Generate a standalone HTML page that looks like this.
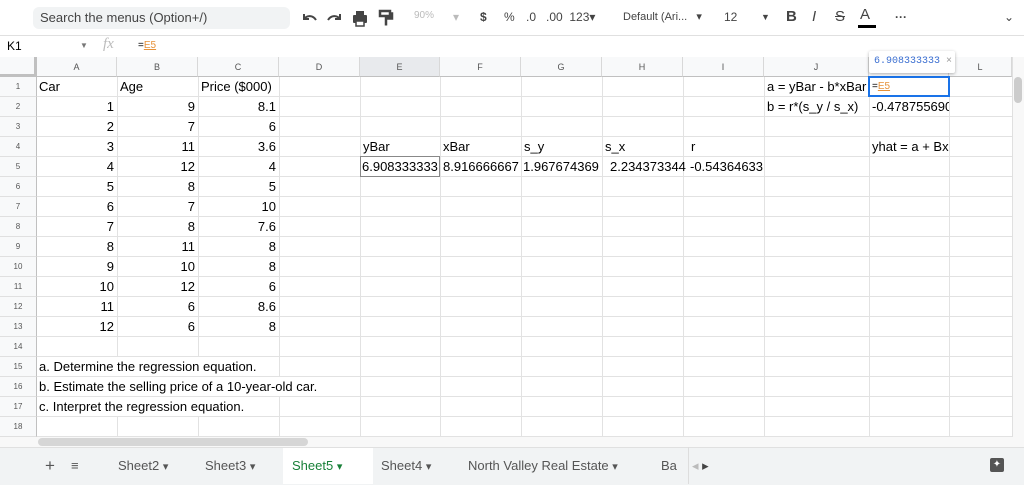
<!DOCTYPE html><html><head><style>
body{margin:0;width:1024px;height:484px;overflow:hidden;font-family:"Liberation Sans",Arial,sans-serif;background:#fff;position:relative}
.a{position:absolute}
.tb{left:0;top:0;width:1024px;height:35px;background:#fff;border-bottom:1px solid #e0e0e0}
.srch{left:33px;top:7px;width:257px;height:22px;background:#f1f3f4;border-radius:6px;font-size:13px;color:#444;line-height:22px;padding-left:7px;box-sizing:border-box}
.ti{top:10px;font-size:12px;color:#444}
.fb{left:0;top:35px;width:1024px;height:22px;border-bottom:1px solid #d0d0d0}
.ch{position:absolute;top:57px;height:20px;background:#f8f9fa;border-right:1px solid #d8d8d8;border-bottom:1px solid #c0c0c0;box-sizing:border-box;font-size:9px;color:#555;text-align:center;line-height:20px}
.rh{position:absolute;left:0;width:37px;height:20px;background:#f8f9fa;border-right:1px solid #c0c0c0;border-bottom:1px solid #e0e0e0;box-sizing:border-box;font-size:8px;color:#555;text-align:center;line-height:20px}
.c{position:absolute;font-size:13px;color:#000;line-height:19px;white-space:nowrap}
.r{text-align:right}
.tab{top:447px;font-size:13px;color:#555;line-height:37px}
</style></head><body>
<div class="a tb"></div>
<div class="a srch">Search the menus (Option+/)</div>
<svg class="a" style="left:300px;top:8px" width="100" height="20" fill="none" stroke="#444" stroke-width="2">
<path d="M4 6v5h5M4 11c3-4 9-4 12 1"/>
<path d="M40 6v5h-5M40 11c-3-4-9-4-12 1"/>
<rect x="53" y="7" width="14" height="8" fill="#444" stroke="none" rx="1"/><rect x="56" y="3" width="8" height="4" fill="#444" stroke="none"/><rect x="56" y="13" width="8" height="5" fill="#fff" stroke="#444" stroke-width="1.5"/>
<path d="M80 3h10v5h-10zM90 5.5h2v5h-6v7" stroke-width="2.5"/>
</svg>
<div class="a ti" style="left:414px;color:#bbb;font-size:10px">90%</div>
<div class="a ti" style="left:453px;color:#bbb">▾</div>
<div class="a ti" style="left:480px;font-weight:bold">$</div>
<div class="a ti" style="left:504px">%</div>
<div class="a ti" style="left:526px">.0&nbsp;&nbsp;&nbsp;.00&nbsp;&nbsp;123▾</div>
<div class="a ti" style="left:623px;font-size:11px">Default (Ari...&nbsp;&nbsp;&nbsp;▾</div>
<div class="a ti" style="left:724px">12</div>
<div class="a ti" style="left:761px;font-size:9px;top:12px">▼</div>
<div class="a ti" style="left:786px;font-size:15px;top:8px;font-weight:bold">B</div>
<div class="a ti" style="left:812px;font-size:15px;top:8px;font-style:italic">I</div>
<div class="a ti" style="left:835px;font-size:15px;top:8px;text-decoration:line-through">S</div>
<div class="a ti" style="left:860px;font-size:15px;top:6px">A</div>
<div class="a" style="left:858px;top:25px;width:18px;height:3px;background:#000"></div>
<div class="a ti" style="left:895px;font-weight:bold">···</div>
<div class="a ti" style="left:1004px">⌄</div>
<div class="a fb"></div>
<div class="a" style="left:7px;top:39px;font-size:12px">K1</div>
<div class="a" style="left:80px;top:41px;font-size:8px;color:#777">▼</div>
<div class="a" style="left:103px;top:36px;font-size:15px;color:#bbb;font-style:italic;font-family:'Liberation Serif',serif">fx</div>
<div class="a" style="left:138px;top:40px;font-size:10px">=<span style="color:#e69138;text-decoration:underline">E5</span></div>
<div class="ch" style="left:0;width:37px;border-right:3px solid #c0c0c0;border-bottom:3px solid #c0c0c0"></div>
<div class="ch" style="left:37px;width:80px">A</div><div class="ch" style="left:117px;width:81px">B</div><div class="ch" style="left:198px;width:81px">C</div><div class="ch" style="left:279px;width:81px">D</div><div class="ch" style="left:360px;width:80px;background:#e8eaed">E</div><div class="ch" style="left:440px;width:81px">F</div><div class="ch" style="left:521px;width:81px">G</div><div class="ch" style="left:602px;width:81px">H</div><div class="ch" style="left:683px;width:81px">I</div><div class="ch" style="left:764px;width:105px">J</div><div class="ch" style="left:869px;width:80px">K</div><div class="ch" style="left:949px;width:63px">L</div>
<svg class="a" style="left:37px;top:77px" width="975" height="360">
<g stroke="#e2e2e2" stroke-width="1">
<path d="M80.5 0V360M161.5 0V360M242.5 0V360M323.5 0V360M403.5 0V360M484.5 0V360M565.5 0V360M646.5 0V360M727.5 0V360M832.5 0V360M912.5 0V360"/>
<path d="M0 19.5H975M0 39.5H975M0 59.5H975M0 79.5H975M0 99.5H975M0 119.5H975M0 139.5H975M0 159.5H975M0 179.5H975M0 199.5H975M0 219.5H975M0 239.5H975M0 259.5H975M0 279.5H975M0 299.5H975M0 319.5H975M0 339.5H975M0 359.5H975"/>
</g></svg>
<div class="rh" style="top:77px">1</div><div class="rh" style="top:97px">2</div><div class="rh" style="top:117px">3</div><div class="rh" style="top:137px">4</div><div class="rh" style="top:157px">5</div><div class="rh" style="top:177px">6</div><div class="rh" style="top:197px">7</div><div class="rh" style="top:217px">8</div><div class="rh" style="top:237px">9</div><div class="rh" style="top:257px">10</div><div class="rh" style="top:277px">11</div><div class="rh" style="top:297px">12</div><div class="rh" style="top:317px">13</div><div class="rh" style="top:337px">14</div><div class="rh" style="top:357px">15</div><div class="rh" style="top:377px">16</div><div class="rh" style="top:397px">17</div><div class="rh" style="top:417px">18</div>
<div class="c" style="left:39px;top:77px">Car</div><div class="c" style="left:120px;top:77px">Age</div><div class="c" style="left:201px;top:77px">Price ($000)</div>
<div class="c r" style="left:37px;width:77px;top:97px;line-height:20px">1<br>2<br>3<br>4<br>5<br>6<br>7<br>8<br>9<br>10<br>11<br>12</div>
<div class="c r" style="left:117px;width:78px;top:97px;line-height:20px">9<br>7<br>11<br>12<br>8<br>7<br>8<br>11<br>10<br>12<br>6<br>6</div>
<div class="c r" style="left:198px;width:78px;top:97px;line-height:20px">8.1<br>6<br>3.6<br>4<br>5<br>10<br>7.6<br>8<br>8<br>6<br>8.6<br>8</div>
<div class="c" style="left:767px;top:77px">a = yBar - b*xBar</div>
<div class="c" style="left:767px;top:97px">b = r*(s_y / s_x)</div>
<div class="c" style="left:872px;top:97px;width:77px;overflow:hidden">-0.4787556900</div>
<div class="c" style="left:363px;top:137px">yBar</div><div class="c" style="left:443px;top:137px">xBar</div><div class="c" style="left:524px;top:137px">s_y</div><div class="c" style="left:605px;top:137px">s_x</div><div class="c" style="left:691px;top:137px">r</div><div class="c" style="left:872px;top:137px">yhat = a + Bx</div>
<div class="a" style="left:360px;top:156px;width:80px;height:21px;border:1px solid #888;box-sizing:border-box;background:#fff"></div>
<div class="c" style="left:362px;top:157px">6.908333333</div><div class="c" style="left:443px;top:157px">8.916666667</div><div class="c" style="left:523px;top:157px">1.967674369</div><div class="c" style="left:610px;top:157px">2.234373344</div><div class="c" style="left:690px;top:157px">-0.54364633</div>
<div class="a" style="left:868px;top:76px;width:82px;height:21px;border:2px solid #1a73e8;box-sizing:border-box;background:#fff;font-size:10px;line-height:17px;padding-left:2px">=<span style="color:#e69138;text-decoration:underline">E5</span></div>
<div class="a" style="left:869px;top:51px;width:86px;height:22px;background:#fff;box-shadow:0 1px 3px rgba(0,0,0,.3);border-radius:2px;font-family:'Liberation Mono',monospace;font-size:10px;color:#3b6fd1;line-height:22px;padding-left:5px;box-sizing:border-box">6.908333333 <span style="color:#999">×</span></div>
<div class="c" style="left:38px;top:357px;background:#fff;padding:0 2px 0 1px">a. Determine the regression equation.</div>
<div class="c" style="left:38px;top:377px;background:#fff;padding:0 2px 0 1px">b. Estimate the selling price of a 10-year-old car.</div>
<div class="c" style="left:38px;top:397px;background:#fff;padding:0 2px 0 1px">c. Interpret the regression equation.</div>
<div class="a" style="left:1012px;top:57px;width:12px;height:380px;background:#f8f8f8;border-left:1px solid #e0e0e0"></div>
<div class="a" style="left:1014px;top:77px;width:8px;height:26px;background:#ccc;border-radius:4px"></div>
<div class="a" style="left:0;top:437px;width:1024px;height:10px;background:#f8f8f8"></div>
<div class="a" style="left:38px;top:438px;width:270px;height:8px;background:#d6d6d6;border-radius:4px"></div>
<div class="a" style="left:0;top:447px;width:1024px;height:37px;background:#f1f3f4;border-top:1px solid #e0e0e0"></div>
<div class="a tab" style="left:45px;font-size:17px">+</div>
<div class="a tab" style="left:71px">≡</div>
<div class="a tab" style="left:118px">Sheet2 <small>▾</small></div>
<div class="a tab" style="left:205px">Sheet3 <small>▾</small></div>
<div class="a" style="left:283px;top:448px;width:90px;height:36px;background:#fff"></div>
<div class="a tab" style="left:292px;color:#188038">Sheet5 <small>▾</small></div>
<div class="a tab" style="left:381px">Sheet4 <small>▾</small></div>
<div class="a tab" style="left:468px">North Valley Real Estate <small>▾</small></div>
<div class="a tab" style="left:661px">Ba</div>
<div class="a tab" style="left:692px;color:#bbb">◂ <span style="color:#444">▸</span></div>
<div class="a" style="left:688px;top:447px;width:1px;height:37px;background:#ddd"></div>
<div class="a" style="left:990px;top:458px;width:14px;height:14px;background:#555;border-radius:2px;color:#fff;font-size:10px;text-align:center;line-height:14px">✦</div>
</body></html>
